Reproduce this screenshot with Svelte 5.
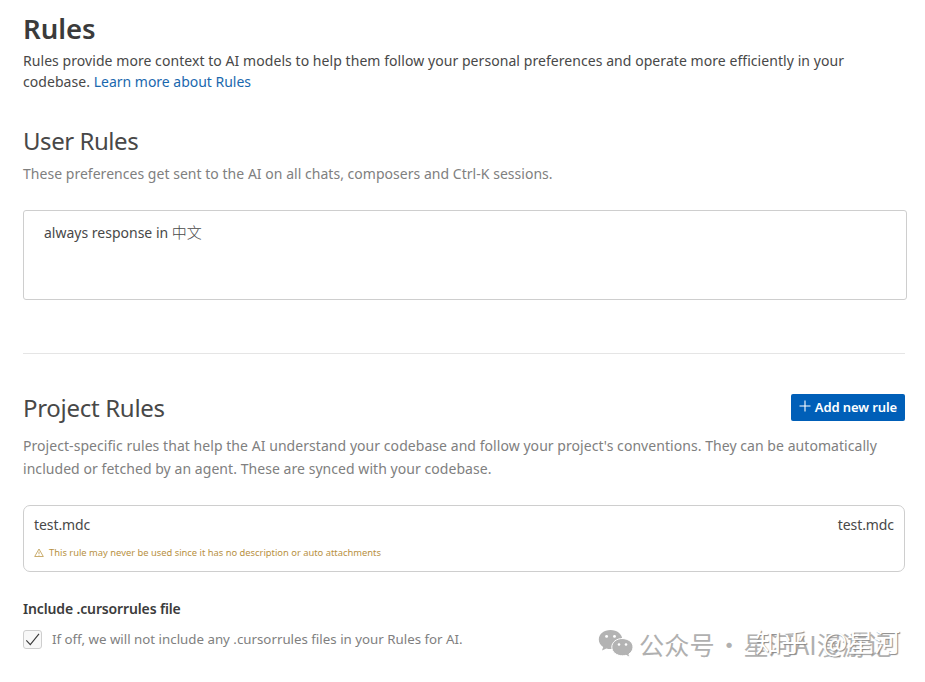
<script>
  let include = $state(true);
</script>

<main>
  <h1>Rules</h1>
  <p class="intro">Rules provide more context to AI models to help them follow your personal preferences and operate more efficiently in your<br />codebase. <a href="#rules">Learn more about Rules</a></p>

  <h2 class="user">User Rules</h2>
  <p class="hint">These preferences get sent to the AI on all chats, composers and Ctrl-K sessions.</p>
  <div class="editor" contenteditable="true" spellcheck="false" role="textbox" aria-label="User Rules" tabindex="0">always response in <span>中文</span></div>

  <hr />

  <header>
    <h2 class="project">Project Rules</h2>
    <button>
      <svg width="12" height="12" viewBox="0 0 12 12"><path d="M6 .5v11M.5 6h11" stroke="#fff" stroke-width="1.1" /></svg>
      <span>Add new rule</span>
    </button>
  </header>
  <p class="desc">Project-specific rules that help the AI understand your codebase and follow your project's conventions. They can be automatically<br />included or fetched by an agent. These are synced with your codebase.</p>

  <section class="card">
    <div class="files"><span>test.mdc</span><span>test.mdc</span></div>
    <div class="warning">
      <svg width="10" height="10" viewBox="0 0 10 10" fill="none" stroke="currentColor" stroke-width=".75"><path d="M5 1 9.300 8.500H.7Z" stroke-linejoin="round" /><path d="M5 3.600v2.400M5 6.800v.8" /></svg>
      <span>This rule may never be used since it has no description or auto attachments</span>
    </div>
  </section>

  <h3>Include .cursorrules file</h3>
  <label>
    <input type="checkbox" bind:checked={include} />
    <span class="box">
      {#if include}<svg width="17" height="17" viewBox="0 0 17 17"><path d="m2.300 9.400 4 4.300L15 2.900" fill="none" stroke="#3b3b3b" stroke-width="1.150" /></svg>{/if}
    </span>
    <span class="off">If off, we will not include any .cursorrules files in your Rules for AI.</span>
  </label>

  <div class="account">
    <svg width="36" height="30" viewBox="0 0 36 30">
      <path fill="#b3b3b3" d="M12.500 1C5.900 1 .8 5.100.8 10.500c0 3.100 1.700 5.700 4.400 7.400L4 21.600l4.400-2.200c1.300.4 2.600.6 4.100.6 6.600 0 11.800-4.200 11.800-9.500S19.100 1 12.500 1Z" />
      <path fill="#b3b3b3" stroke="#fff" stroke-width="1" d="M24.500 9.500c-6 0-10.700 3.700-10.700 8.600s4.700 8.700 10.700 8.700c1.200 0 2.400-.2 3.500-.5l3.900 2.200-1-3.500c2.500-1.600 4.100-4 4.100-6.900 0-4.900-4.600-8.600-11.500-8.600Z" />
      <g fill="#fff"><circle cx="8.600" cy="7.400" r="1.450" /><circle cx="16.500" cy="7.400" r="1.450" /><circle cx="21" cy="15.500" r="1.300" /><circle cx="28" cy="15.500" r="1.300" /></g>
    </svg>
    <span class="label">公众号</span><span class="dot">·</span><span class="name">星河AI漫游记</span>
  </div>
  <div class="signature"><span>知乎</span><span>@星河</span></div>
</main>

<style>
  :global(body) { background: #fff; }
  main {
    position: relative;
    box-sizing: border-box;
    width: 925px;
    height: 682px;
    padding: 9px 20px 0 23px;
    overflow: hidden;
    color: #484848;
    font: 14px/21px "Noto Sans", "Noto Sans CJK SC", sans-serif;
  }
  h1, h2, h3, p { margin: 0; white-space: nowrap; }
  h1 { margin-bottom: 1px; color: #3b3b3b; font-size: 27.500px; line-height: 40px; font-weight: 600; }
  .intro { letter-spacing: .06px; }
  a { color: #1a68ae; text-decoration: none; letter-spacing: -.02px; }
  h2 { font-size: 24px; line-height: 32px; font-weight: 400; letter-spacing: -.45px; }
  .user { margin-top: 33px; }
  .hint { margin-top: 6px; line-height: 22px; color: #808080; letter-spacing: .03px; }
  .editor {
    box-sizing: border-box;
    width: 884px;
    height: 90px;
    margin-top: 25px;
    padding: 11px 20px;
    border: 1px solid #cecece;
    border-radius: 3px;
    outline: 0;
    line-height: 22px;
  }
  .editor span { font-size: 15px; font-weight: 300; line-height: 20px; }
  hr { width: 882px; height: 1px; margin: 53px 0 38px; border: 0; background: #e5e5e5; }
  header { display: flex; width: 882px; height: 32px; align-items: center; justify-content: space-between; }
  .project { letter-spacing: -.3px; }
  button {
    display: flex;
    align-items: center;
    gap: 4px;
    height: 27px;
    margin: 0 0 2px;
    padding: 0 8px;
    border: 0;
    border-radius: 2px;
    background: #005fb8;
    color: #fff;
    font: 600 13px/27px "Noto Sans", sans-serif;
    letter-spacing: -.1px;
    white-space: nowrap;
  }
  button span { padding-top: 1px; }
  button svg { margin-top: -2px; }
  .desc { margin-top: 10px; line-height: 23px; color: #808080; letter-spacing: .053px; }
  .card {
    box-sizing: border-box;
    width: 882px;
    height: 67px;
    margin-top: 25px;
    padding: 8px 10px;
    border: 1px solid #cecece;
    border-radius: 7px;
  }
  .files { display: flex; justify-content: space-between; line-height: 22px; letter-spacing: -.08px; }
  .warning { display: flex; align-items: center; gap: 5px; margin-top: 10px; color: #b8913f; font-size: 9.400px; line-height: 14px; letter-spacing: -.01px; white-space: nowrap; }
  h3 { margin-top: 26px; color: #3b3b3b; font-size: 14px; line-height: 22px; font-weight: 600; letter-spacing: -.14px; }
  label { display: flex; align-items: center; gap: 10px; height: 20px; margin-top: 9px; color: #808080; font-size: 13.300px; white-space: nowrap; }
  input { position: absolute; opacity: 0; width: 0; height: 0; margin: 0; }
  .box { display: flex; align-items: center; justify-content: center; box-sizing: border-box; width: 19px; height: 19px; border: 1px solid #cecece; border-radius: 3px; background: #f8f8f8; }
  .account { position: absolute; left: 598px; top: 629px; display: flex; align-items: flex-start; color: #b0b0b0; font: 25.200px/30px "Noto Sans CJK SC", sans-serif; white-space: nowrap; }
  .account .label { margin-left: 5px; }
  .account .dot { width: 29px; text-align: center; }
  .signature { position: absolute; left: 755px; top: 625px; display: flex; gap: 15px; color: #fff; font: 26.300px/32px "Noto Sans CJK SC", sans-serif; text-shadow: 1px 1px 1px #888; white-space: nowrap; }
</style>
